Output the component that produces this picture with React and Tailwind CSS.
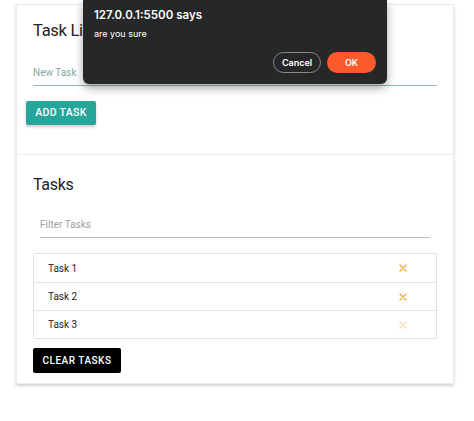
import React from 'react';

const tasks = [
    { id: 1, name: 'Task 1', fade: false },
    { id: 2, name: 'Task 2', fade: false },
    { id: 3, name: 'Task 3', fade: true }
];

const CloseIcon = ({ faded }) => (
    <svg width="8" height="8" viewBox="0 0 8 8" className={faded ? 'text-[#f7dcae]' : 'text-[#efa83f]'}>
        <path d="M1 1L7 7M7 1L1 7" stroke="currentColor" strokeWidth="1.4" strokeLinecap="round" />
    </svg>
);

const App = () => {
    return (
        <div className="relative w-[474px] h-[421px] bg-white overflow-hidden font-['Roboto',sans-serif]">
            <div className="mt-[4px] ml-[16px] w-[438px] bg-white border border-[#ebebeb] shadow-[0_2px_3px_rgba(0,0,0,0.18)]">
                <div className="px-[9px] pt-[14px] pb-[29px]">
                    <h1 className="mx-[7px] h-[24px] text-[16.5px] leading-[24px] text-[#222] tracking-[-0.3px]">Task List</h1>
                    <div className="mx-[7px] mt-[17px] h-[26px] border-b border-[#8fbdb6] flex items-center">
                        <span className="text-[10px] text-[#7fa9a3]">New Task</span>
                    </div>
                    <button className="mt-[15px] w-[70px] h-[24px] bg-[#26a69a] text-white text-[10.5px] font-medium tracking-[0.3px] rounded-[2px] shadow-[0_2px_3px_rgba(0,0,0,0.2)]">
                        ADD TASK
                    </button>
                </div>

                <div className="border-t border-[#ececec] px-[16px] pt-[18px] pb-[10px]">
                    <h2 className="h-[24px] text-[16px] leading-[24px] text-[#222] tracking-[-0.3px]">Tasks</h2>
                    <div className="mx-[7px] mt-[15px] h-[26px] border-b border-[#bdbdbd] flex items-center">
                        <span className="text-[10px] text-[#9e9e9e]">Filter Tasks</span>
                    </div>
                    <ul className="mt-[15px] border border-[#e3e3e3]">
                        {tasks.map((t, i) => (
                            <li key={t.id} className={`h-[28px] flex items-center justify-between pl-[14px] pr-[29px] ${i > 0 ? 'border-t border-[#e3e3e3]' : ''}`}>
                                <span className="text-[10px] text-[#222]">{t.name}</span>
                                <CloseIcon faded={t.fade} />
                            </li>
                        ))}
                    </ul>
                    <button className="mt-[9px] w-[88px] h-[25px] bg-black text-white text-[10px] font-medium tracking-[0.5px] rounded-[2px]">
                        CLEAR TASKS
                    </button>
                </div>
            </div>

            <div className="absolute left-[83px] top-0 w-[304px] h-[84px] bg-[#262729] rounded-b-[6px] shadow-[0_4px_10px_rgba(0,0,0,0.35)] px-[11px] font-['Inter',sans-serif]">
                <div className="pt-[7px] text-[11.5px] font-semibold text-white leading-[16px]">127.0.0.1:5500 says</div>
                <div className="mt-[5px] text-[9px] text-white leading-[12px]">are you sure</div>
                <div className="mt-[12px] flex justify-end gap-[6px]">
                    <button className="w-[48px] h-[21px] rounded-full border border-[#8a8a8a] text-white text-[9px] font-semibold">Cancel</button>
                    <button className="w-[49px] h-[21px] rounded-full bg-[#fb5a2b] text-white text-[9px] font-semibold">OK</button>
                </div>
            </div>
        </div>
    );
};

export default App;
